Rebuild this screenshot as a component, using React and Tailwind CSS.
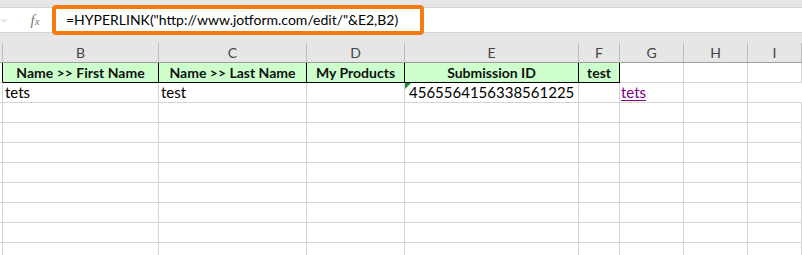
import React from 'react';

// column widths include the 1px right grid line
const cols = [
  { key: 'B', w: 'w-[156px]' },
  { key: 'C', w: 'w-[148px]' },
  { key: 'D', w: 'w-[98px]' },
  { key: 'E', w: 'w-[174px]' },
  { key: 'F', w: 'w-[41px]' },
  { key: 'G', w: 'w-[64px]' },
  { key: 'H', w: 'w-[64px]' },
  { key: 'I', w: 'flex-1' },
];

const headers = ['Name >> First Name', 'Name >> Last Name', 'My Products', 'Submission ID', 'test'];

const FONT = "font-['Lato','Liberation_Sans',sans-serif]";

function FormulaBar() {
  return (
    <div className="relative h-[26px] bg-white border-y border-[#d4d4d4] flex items-center">
      <div className="w-[18px] h-full flex items-center pl-[1px]">
        <svg width="6" height="5" viewBox="0 0 6 5" className="mt-[1px]">
          <path d="M0.5 1 L3 4 L5.5 1" fill="none" stroke="#c8c8c8" strokeWidth="1" />
        </svg>
      </div>
      <div className="w-[34px] flex justify-center">
        <span className="font-['Liberation_Serif',serif] italic text-[15px] text-[#7a7a7a] leading-none">
          f<span className="text-[11px]">x</span>
        </span>
      </div>
      <div className="pl-[14px] text-[14px] text-black whitespace-nowrap leading-none">
        =HYPERLINK("http://www.jotform.com/edit/"&amp;E2,B2)
      </div>
      {/* annotation outline */}
      <div className="absolute left-[52px] top-[-3px] w-[372px] h-[30px] border-[4px] border-[#f77a10] rounded-[4px]" />
    </div>
  );
}

function ColumnHeaders() {
  return (
    <div className="flex h-[20px] bg-[#e6e6e6] border-b border-[#9e9e9e]">
      <div className="w-[3px] border-r border-[#bdbdbd]" />
      {cols.map((c) => (
        <div
          key={c.key}
          className={`${c.w} border-r border-[#bdbdbd] flex items-center justify-center text-[14px] text-[#444] leading-none`}
        >
          {c.key}
        </div>
      ))}
    </div>
  );
}

function HeaderRow() {
  return (
    <div className="flex h-[20px]">
      <div className="w-[3px] border-r border-black border-b border-b-[#d4d4d4]" />
      {cols.map((c, i) =>
        i < headers.length ? (
          <div
            key={c.key}
            className={`${c.w} bg-[#ccffcc] border-r border-b border-black flex items-center justify-center text-[14px] font-bold text-[#111] leading-none whitespace-nowrap`}
          >
            {headers[i]}
          </div>
        ) : (
          <div key={c.key} className={`${c.w} border-r border-b border-[#d4d4d4]`} />
        )
      )}
    </div>
  );
}

function DataRow() {
  return (
    <div className="flex h-[20px]">
      <div className="w-[3px] border-r border-b border-[#d4d4d4]" />
      <div className="w-[156px] border-r border-b border-[#d4d4d4] flex items-end pl-[2px] pb-[2px] text-[15px] leading-none">tets</div>
      <div className="w-[148px] border-r border-b border-[#d4d4d4] flex items-end pl-[2px] pb-[2px] text-[15px] leading-none">test</div>
      <div className="w-[98px] border-r border-b border-[#d4d4d4]" />
      <div className="relative w-[174px] border-r border-b border-[#d4d4d4] flex items-end pl-[4px] pb-[2px] text-[15px] leading-none">
        <span className="absolute left-0 top-0 w-0 h-0 border-t-[6px] border-r-[6px] border-t-[#1e8c2e] border-r-transparent" />
        4565564156338561225
      </div>
      <div className="w-[41px] border-r border-b border-[#d4d4d4]" />
      <div className="w-[64px] border-r border-b border-[#d4d4d4] flex items-end pl-[1px] pb-[2px] text-[15px] leading-none">
        <span className="text-[#800080] underline decoration-[1px] underline-offset-2">tets</span>
      </div>
      <div className="w-[64px] border-r border-b border-[#d4d4d4]" />
      <div className="flex-1 border-b border-[#d4d4d4]" />
    </div>
  );
}

function EmptyRow() {
  return (
    <div className="flex h-[20px]">
      <div className="w-[3px] border-r border-b border-[#d4d4d4]" />
      {cols.map((c) => (
        <div key={c.key} className={`${c.w} border-r border-b border-[#d4d4d4]`} />
      ))}
    </div>
  );
}

export default function App() {
  return (
    <div className={`w-[802px] h-[255px] overflow-hidden bg-white ${FONT}`}>
      <div className="h-[7px] bg-[#e6e6e6]" />
      <FormulaBar />
      <div className="h-[10px] bg-[#e6e6e6]" />
      <ColumnHeaders />
      <HeaderRow />
      <DataRow />
      {Array.from({ length: 8 }).map((_, i) => (
        <EmptyRow key={i} />
      ))}
    </div>
  );
}
